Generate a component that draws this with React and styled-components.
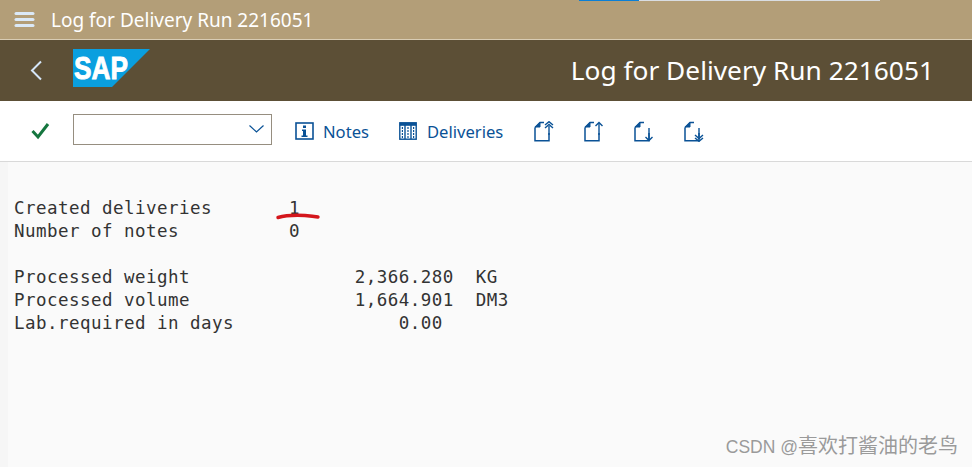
import React from 'react';
import styled, { createGlobalStyle } from 'styled-components';

const GlobalStyle = createGlobalStyle`
  html, body {
    margin: 0;
    padding: 0;
    background: #fafafa;
  }
  body {
    font-family: 'Noto Sans', 'Open Sans', sans-serif;
  }
`;

const Page = styled.div`
  position: relative;
  width: 972px;
  height: 467px;
  overflow: hidden;
  background: #fafafa;
`;

const ProgressBar = styled.div`
  position: absolute;
  top: 0;
  left: 579px;
  width: 301px;
  height: 1px;
  background: #d9dde2;
`;

const ProgressFill = styled.div`
  width: 60px;
  height: 100%;
  background: #0a7fd6;
`;

const ShellBar = styled.header`
  display: flex;
  align-items: center;
  gap: 16px;
  height: 39px;
  padding-left: 14px;
  background: #b39e78;
  border-bottom: 1px solid #d8ccb4;
`;

const ShellTitle = styled.div`
  font-size: 19px;
  color: #fff;
`;

const TitleBar = styled.div`
  display: flex;
  align-items: center;
  height: 61px;
  padding: 0 38px 0 30px;
  background: #5c4f36;
`;

const BackButton = styled.div`
  display: flex;
  width: 43px;
`;

const LogoBox = styled.div`
  display: flex;
  margin-bottom: 6px;
`;

const PageTitle = styled.h1`
  margin: 0 0 2px auto;
  font-size: 26.3px;
  font-weight: 400;
  color: #fff;
`;

const Toolbar = styled.div`
  display: flex;
  align-items: center;
  height: 60px;
  padding-left: 31px;
  background: #fff;
  border-bottom: 1px solid #d9d9d9;
`;

const Select = styled.div`
  display: flex;
  align-items: center;
  justify-content: flex-end;
  box-sizing: border-box;
  width: 199px;
  height: 31px;
  margin: 0 23px 4px 23px;
  padding-right: 7px;
  background: #fff;
  border: 1px solid #968e80;
`;

const ToolButton = styled.div`
  display: flex;
  align-items: center;
  gap: ${p => p.$inner || 9}px;
  margin-right: ${p => p.$gap}px;
  font-size: 16.6px;
  color: #0a5296;
`;

const Report = styled.pre`
  box-sizing: border-box;
  height: 305px;
  margin: 0;
  padding: 35px 0 0 6px;
  border-left: 8px solid #f6f6f6;
  font-family: 'DejaVu Sans Mono', 'Liberation Mono', monospace;
  font-size: 17.5px;
  letter-spacing: 0.46px;
  line-height: 23px;
  color: #333;
`;

const RedMark = styled.svg`
  position: absolute;
  left: 275px;
  top: 212px;
`;

const Watermark = styled.div`
  position: absolute;
  right: 14px;
  bottom: 8px;
  font-family: 'Liberation Sans', 'Noto Sans CJK SC', sans-serif;
  font-size: 17.5px;
  color: #9a9a9a;
`;

const WatermarkName = styled.span`
  font-size: 20px;
`;

const BLUE = '#0a5296';

const MenuIcon = () => (
  <svg width="21" height="17" viewBox="0 0 21 17">
    <g stroke="#dbe9f7" strokeWidth="3" strokeLinecap="round">
      <line x1="2" y1="2.5" x2="19" y2="2.5" />
      <line x1="2" y1="8.5" x2="19" y2="8.5" />
      <line x1="2" y1="14.5" x2="19" y2="14.5" />
    </g>
  </svg>
);

const BackIcon = () => (
  <svg width="13" height="21" viewBox="0 0 13 21">
    <path d="M11 1.5 L2 10.5 L11 19.5" fill="none" stroke="#d5e6f8" strokeWidth="2" />
  </svg>
);

const SapLogo = () => (
  <svg width="77" height="38" viewBox="0 0 77 38">
    <polygon points="0,0 77,0 39,38 0,38" fill="#0a9fdf" />
    <text
      x="1"
      y="30"
      fontFamily="'Liberation Sans', sans-serif"
      fontWeight="700"
      fontSize="32"
      textLength="54"
      lengthAdjust="spacingAndGlyphs"
      fill="#fff"
      stroke="#fff"
      strokeWidth="0.9"
    >
      SAP
    </text>
  </svg>
);

const CheckIcon = () => (
  <svg width="19" height="18" viewBox="0 0 19 18">
    <path d="M1.5 9 L7 15 L17 2" fill="none" stroke="#15763f" strokeWidth="3" />
  </svg>
);

const ChevronIcon = () => (
  <svg width="15" height="8" viewBox="0 0 15 8">
    <path d="M0.5 0.5 L7.5 7 L14.5 0.5" fill="none" stroke={BLUE} strokeWidth="1.2" />
  </svg>
);

const InfoIcon = () => (
  <svg width="19" height="18" viewBox="0 0 19 18">
    <rect x="1" y="1" width="17" height="16" fill="none" stroke={BLUE} strokeWidth="1.6" />
    <rect x="8" y="3.5" width="3" height="2.5" fill={BLUE} />
    <path d="M7 7.5 H11 V13.5 H12.5 V15 H6.5 V13.5 H8 V9 H7 Z" fill={BLUE} />
  </svg>
);

const TableIcon = () => (
  <svg width="18" height="18" viewBox="0 0 18 18">
    <rect x="0.8" y="0.8" width="16.4" height="16.4" fill="none" stroke={BLUE} strokeWidth="1.4" />
    <rect x="0.8" y="0.8" width="16.4" height="3" fill={BLUE} />
    <g stroke={BLUE} strokeWidth="1.4">
      <line x1="6" y1="1" x2="6" y2="17" />
      <line x1="12" y1="1" x2="12" y2="17" />
    </g>
    <g stroke={BLUE} strokeWidth="1.2" strokeDasharray="2 1">
      <line x1="3.4" y1="5" x2="3.4" y2="16" />
      <line x1="9" y1="5" x2="9" y2="16" />
      <line x1="14.6" y1="5" x2="14.6" y2="16" />
    </g>
  </svg>
);

// page with a folded corner, the arrow differs per button
const PageIcon = ({ up, double }) => (
  <svg width="21" height="21" viewBox="0 0 21 21">
    <path
      d="M1 6.5 L6 1.5 H10 M15 12 V19.8 H1 V6.5"
      fill="none"
      stroke={BLUE}
      strokeWidth="1.5"
    />
    <path d="M1.5 6 L6 1.5 V6 Z" fill={BLUE} stroke={BLUE} />
    {up ? (
      <g fill="none" stroke={BLUE} strokeWidth="1.4">
        <line x1="15" y1={double ? 5 : 2} x2="15" y2="14" />
        <path d={double ? 'M11 7 L15 3.5 L19 7' : 'M11.5 5 L15 1.5 L18.5 5'} />
        {double && <path d="M11 4 L15 0.7 L19 4" />}
      </g>
    ) : (
      <g fill="none" stroke={BLUE} strokeWidth="1.4">
        <line x1="15" y1="7" x2="15" y2={double ? 16 : 19} />
        <path d={double ? 'M11 14 L15 17.5 L19 14' : 'M11.5 16 L15 19.5 L18.5 16'} />
        {double && <path d="M11 17 L15 20.3 L19 17" />}
      </g>
    )}
  </svg>
);

const reportText = [
  'Created deliveries       1',
  'Number of notes          0',
  '',
  'Processed weight               2,366.280  KG',
  'Processed volume               1,664.901  DM3',
  'Lab.required in days               0.00',
].join('\n');

export default function App() {
  return (
    <Page>
      <GlobalStyle />
      <ProgressBar>
        <ProgressFill />
      </ProgressBar>
      <ShellBar>
        <MenuIcon />
        <ShellTitle>Log for Delivery Run 2216051</ShellTitle>
      </ShellBar>
      <TitleBar>
        <BackButton>
          <BackIcon />
        </BackButton>
        <LogoBox>
          <SapLogo />
        </LogoBox>
        <PageTitle>Log for Delivery Run 2216051</PageTitle>
      </TitleBar>
      <Toolbar>
        <CheckIcon />
        <Select>
          <ChevronIcon />
        </Select>
        <ToolButton $gap={30}>
          <InfoIcon />
          Notes
        </ToolButton>
        <ToolButton $gap={31} $inner={10}>
          <TableIcon />
          Deliveries
        </ToolButton>
        <ToolButton $gap={29}>
          <PageIcon up double />
        </ToolButton>
        <ToolButton $gap={29}>
          <PageIcon up />
        </ToolButton>
        <ToolButton $gap={29}>
          <PageIcon />
        </ToolButton>
        <ToolButton $gap={0}>
          <PageIcon double />
        </ToolButton>
      </Toolbar>
      <Report>{reportText}</Report>
      <RedMark width="46" height="8" viewBox="0 0 46 8">
        <path
          d="M3 5.5 C10 3.5 20 3 30 3.5 C36 4 40 4.5 43 5"
          fill="none"
          stroke="#d4161c"
          strokeWidth="3.4"
          strokeLinecap="round"
        />
      </RedMark>
      <Watermark>
        CSDN @<WatermarkName>喜欢打酱油的老鸟</WatermarkName>
      </Watermark>
    </Page>
  );
}
